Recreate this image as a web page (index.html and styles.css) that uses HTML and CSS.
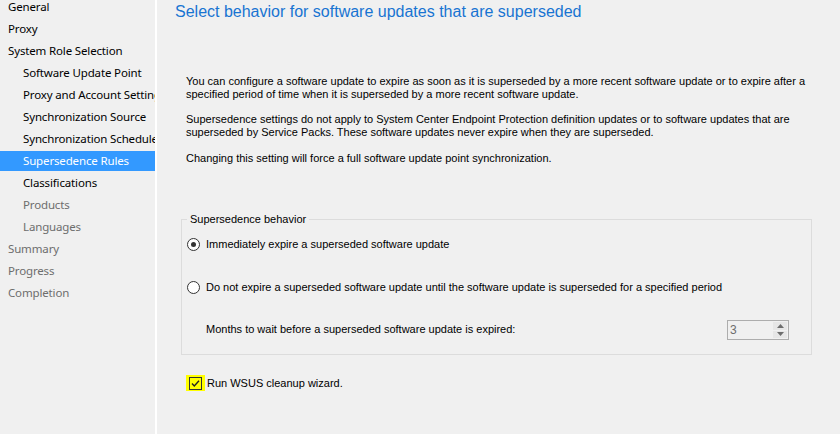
FILE: index.html
```html
<!DOCTYPE html>
<html>
<head>
<meta charset="utf-8">
<link rel="stylesheet" href="styles.css">
</head>
<body>
<div class="window">
  <nav class="sidebar">
    <div class="item">General</div>
    <div class="item">Proxy</div>
    <div class="item">System Role Selection</div>
    <div class="item sub">Software Update Point</div>
    <div class="item sub">Proxy and Account Settings</div>
    <div class="item sub">Synchronization Source</div>
    <div class="item sub">Synchronization Schedule</div>
    <div class="item sub selected">Supersedence Rules</div>
    <div class="item sub">Classifications</div>
    <div class="item sub disabled">Products</div>
    <div class="item sub disabled">Languages</div>
    <div class="item disabled">Summary</div>
    <div class="item disabled">Progress</div>
    <div class="item disabled">Completion</div>
  </nav>
  <main class="main">
    <h1 class="title">Select behavior for software updates that are superseded</h1>
    <p class="para p1">You can configure a software update to expire as soon as it is superseded by a more recent software update or to expire after a<br>specified period of time when it is superseded by a more recent software update.</p>
    <p class="para p2">Supersedence settings do not apply to System Center Endpoint Protection definition updates or to software updates that are<br>superseded by Service Packs. These software updates never expire when they are superseded.</p>
    <p class="para p3">Changing this setting will force a full software update point synchronization.</p>
    <fieldset class="group">
      <legend class="legend">Supersedence behavior</legend>
      <div class="radio-row r1">
        <span class="radio checked"><span class="dot"></span></span>
        <span class="label">Immediately expire a superseded software update</span>
      </div>
      <div class="radio-row r2">
        <span class="radio"></span>
        <span class="label">Do not expire a superseded software update until the software update is superseded for a specified period</span>
      </div>
      <div class="months-row">
        <span class="label">Months to wait before a superseded software update is expired:</span>
        <div class="spin">
          <span class="spin-value">3</span>
          <div class="spin-buttons">
            <div class="spin-btn"><svg width="7" height="4" viewBox="0 0 7 4"><path d="M0 4 L3.5 0 L7 4 Z" fill="#6d6d6d"/></svg></div>
            <div class="spin-btn"><svg width="7" height="4" viewBox="0 0 7 4"><path d="M0 0 L7 0 L3.5 4 Z" fill="#6d6d6d"/></svg></div>
          </div>
        </div>
      </div>
    </fieldset>
    <div class="check-row">
      <span class="check-hl"><svg width="13" height="13" viewBox="0 0 13 13"><rect x="0.5" y="0.5" width="12" height="12" fill="#ffff00" stroke="#333333"/><path d="M3 6.5 L5.3 9 L10 3.8" fill="none" stroke="#222222" stroke-width="1.4"/></svg></span>
      <span class="label">Run WSUS cleanup wizard.</span>
    </div>
  </main>
</div>
</body>
</html>
```
FILE: styles.css
```css
html, body {
  margin: 0;
  padding: 0;
  background: #f0f0f0;
}
.window {
  display: flex;
  width: 840px;
  height: 434px;
  overflow: hidden;
  background: #f0f0f0;
}
.sidebar {
  width: 155px;
  flex: none;
  border-right: 2px solid #ffffff;
  overflow: hidden;
  margin-top: -3px;
  font-family: "Noto Sans", "Liberation Sans", sans-serif;
  font-size: 11.5px;
  letter-spacing: -0.15px;
  color: #000000;
}
.item {
  height: 20px;
  line-height: 20px;
  margin-bottom: 2px;
  padding-left: 8px;
  white-space: nowrap;
  overflow: hidden;
}
.item.sub {
  padding-left: 23px;
}
.item.disabled {
  color: #6d6d6d;
}
.item.selected {
  background: #3399ff;
  color: #ffffff;
}
.main {
  flex: 1;
  padding-left: 18px;
  font-family: "Liberation Sans", Arial, sans-serif;
  font-size: 11px;
  color: #000000;
  display: flex;
  flex-direction: column;
  align-items: flex-start;
}
.title {
  margin: 2px 0 0 0;
  font-size: 16px;
  font-weight: normal;
  line-height: 20px;
  color: #1874d2;
}
.para {
  margin: 0 0 0 11px;
  line-height: 13px;
  white-space: nowrap;
}
.p1 { margin-top: 53px; }
.p2 { margin-top: 12px; }
.p3 { margin-top: 13px; }
.group {
  margin: 48px 0 0 6px;
  width: 631px;
  box-sizing: border-box;
  height: 142px;
  border: 1px solid #dcdcdc;
  padding: 0;
  display: flex;
  flex-direction: column;
}
.legend {
  margin-left: 5px;
  padding: 0 3px;
  line-height: 13px;
}
.radio-row {
  display: flex;
  align-items: center;
  height: 14px;
  padding-left: 5px;
}
.r1 { margin-top: 11px; }
.r2 { margin-top: 29px; }
.radio {
  width: 11px;
  height: 11px;
  border: 1px solid #333333;
  border-radius: 50%;
  background: #ffffff;
  display: flex;
  align-items: center;
  justify-content: center;
  margin-right: 6px;
  flex: none;
}
.dot {
  width: 5px;
  height: 5px;
  border-radius: 50%;
  background: #333333;
}
.months-row {
  display: flex;
  align-items: center;
  justify-content: space-between;
  margin-top: 25px;
  padding-left: 24px;
  padding-right: 22px;
  height: 20px;
}
.spin {
  width: 62px;
  height: 20px;
  box-sizing: border-box;
  border: 1px solid #adadad;
  background: #f0f0f0;
  display: flex;
  justify-content: space-between;
  margin-top: 2px;
}
.spin-value {
  color: #6d6d6d;
  padding-left: 2px;
  line-height: 18px;
  font-size: 12px;
}
.spin-buttons {
  width: 14px;
  display: flex;
  flex-direction: column;
  gap: 1px;
  padding: 1px 1px 1px 0;
}
.spin-btn {
  flex: 1;
  background: #e6e6e6;
  display: flex;
  align-items: center;
  justify-content: center;
}
.check-row {
  display: flex;
  align-items: center;
  margin-top: 20px;
  margin-left: 11px;
}
.check-hl {
  width: 19px;
  height: 16px;
  background: #ffff00;
  display: flex;
  align-items: center;
  justify-content: center;
  margin-right: 2px;
}
```
